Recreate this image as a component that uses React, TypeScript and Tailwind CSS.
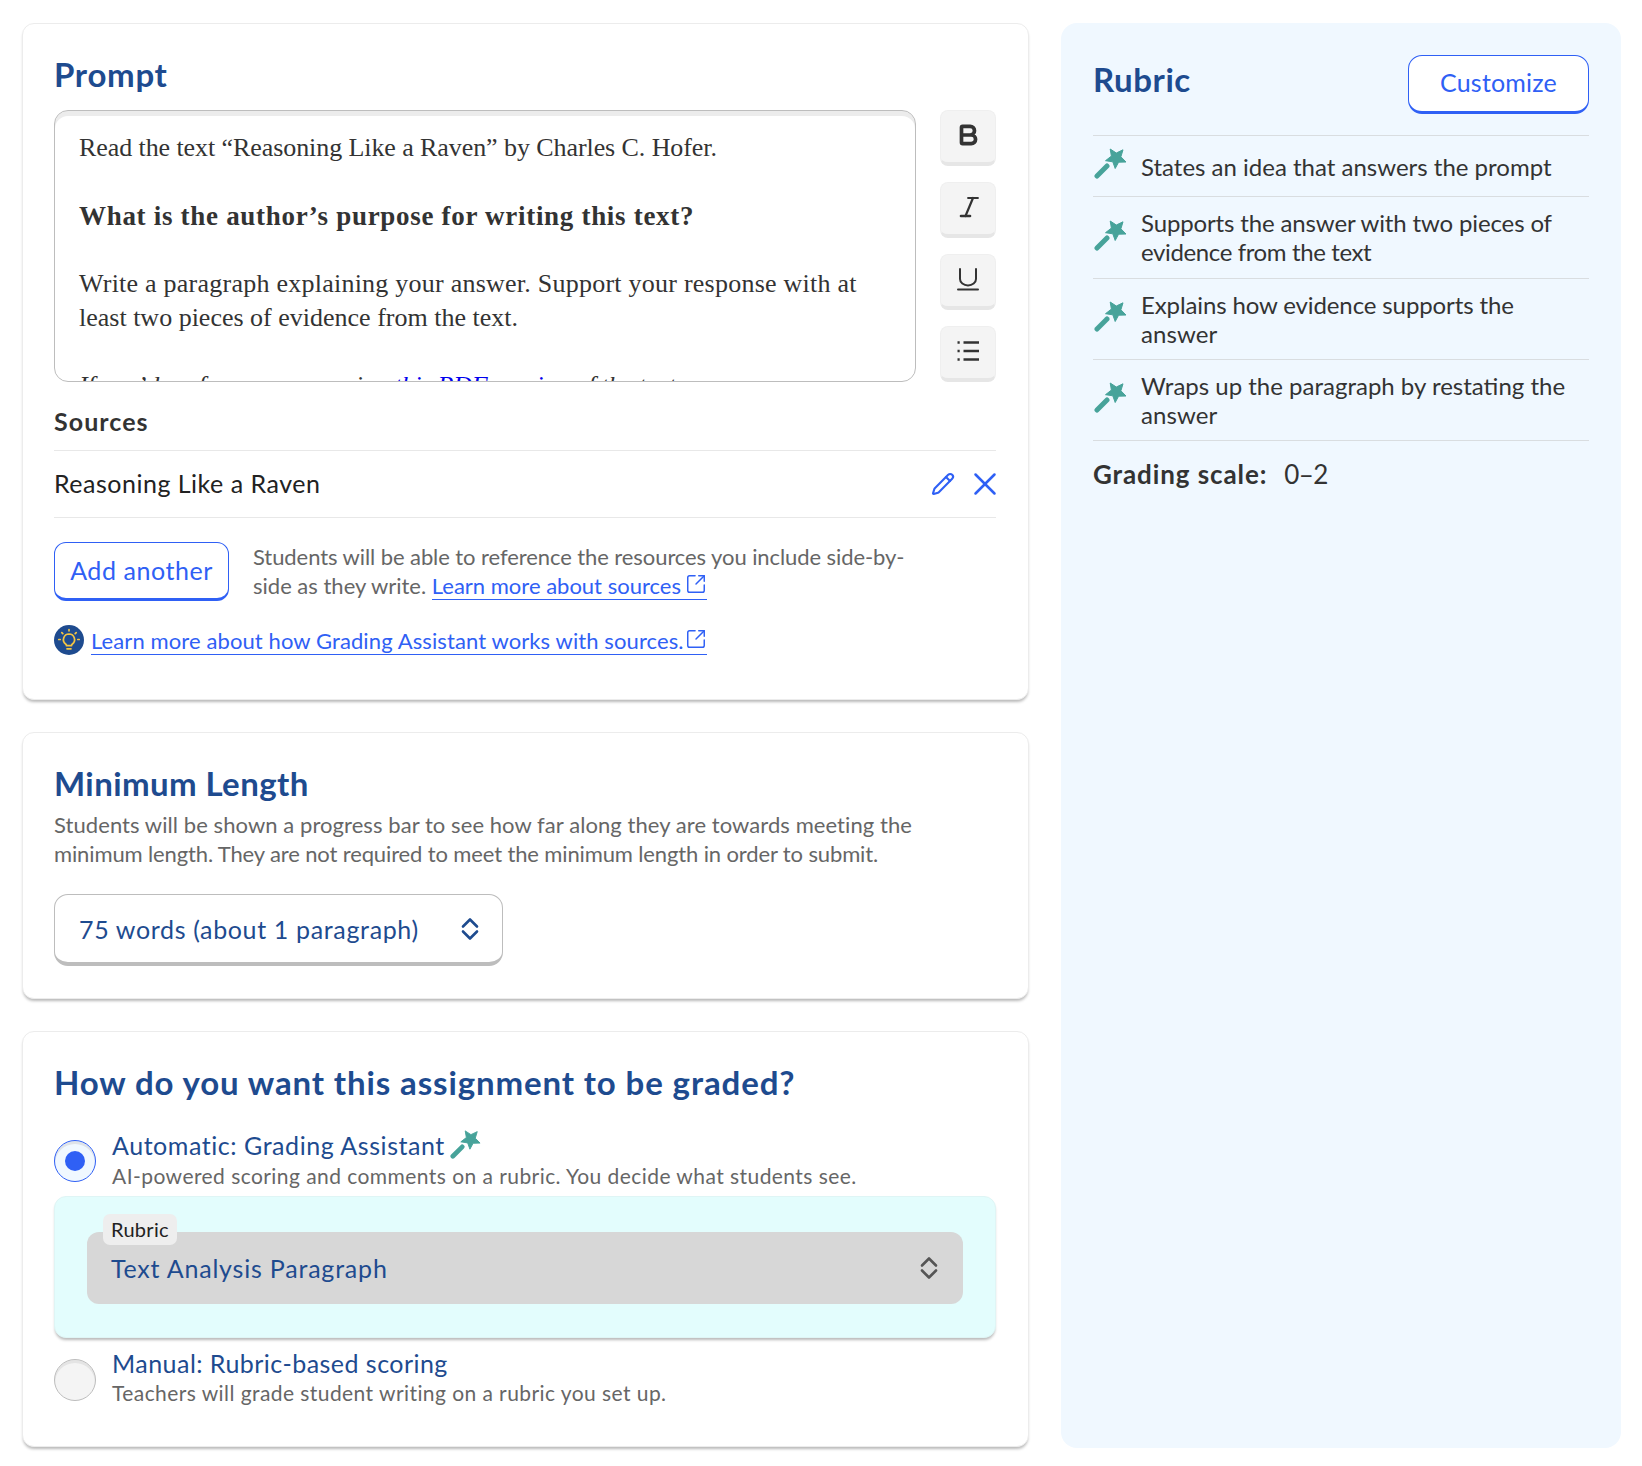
import React from "react";
import { Bold, Pencil, X, SquareArrowOutUpRight } from "lucide-react";

const sans = "font-['Lato','Noto_Sans',sans-serif]";

function Wand({ className = "" }: { className?: string }) {
  return (
    <svg viewBox="0 0 33 31" className={className} aria-hidden="true">
      <polygon
        points="16.2,1 22.3,5 29,1.8 26.9,8.8 32,14 24.6,14.2 21.2,20.5 18.8,13.8 11.5,12.7 17.4,8.1"
        fill="#47a39a"
        stroke="#47a39a"
        strokeWidth="1"
        strokeLinejoin="round"
      />
      <line x1="3" y1="28" x2="13" y2="18" stroke="#47a39a" strokeWidth="5" strokeLinecap="round" />
    </svg>
  );
}

function Updown({ color, className = "" }: { color: string; className?: string }) {
  return (
    <svg viewBox="0 0 20 24" className={className} fill="none" stroke={color} strokeWidth="2.6" strokeLinecap="round" strokeLinejoin="round" aria-hidden="true">
      <path d="M3 9.5 10 2.5l7 7" />
      <path d="M3 14.5l7 7 7-7" />
    </svg>
  );
}

function ItalicGlyph() {
  return (
    <svg viewBox="0 0 24 24" className="h-[24px] w-[24px]" fill="none" stroke="#333" strokeLinecap="round" aria-hidden="true">
      <path d="M12 3h10" strokeWidth="1.8" />
      <path d="M17 3 9.5 21" strokeWidth="2.2" />
      <path d="M5 21h9" strokeWidth="2.6" />
    </svg>
  );
}

function UnderlineGlyph() {
  return (
    <svg viewBox="0 0 24 24" className="h-[24px] w-[24px]" fill="none" stroke="#333" strokeWidth="2" strokeLinecap="round" aria-hidden="true">
      <path d="M4 2v10a8 6.5 0 0 0 16 0V2" />
      <path d="M2 22.5h20" />
    </svg>
  );
}

function ListGlyph() {
  return (
    <svg viewBox="0 0 24 24" className="h-[24px] w-[24px]" fill="none" stroke="#333" strokeWidth="2.3" aria-hidden="true">
      <path d="M7.5 3.5H23M7.5 12H23M7.5 20.5H23" />
      <path d="M1.5 3.5h2.2M1.5 12h2.2M1.5 20.5h2.2" />
    </svg>
  );
}

function BulbGlyph() {
  return (
    <svg viewBox="0 0 24 24" className="h-[24px] w-[24px]" fill="none" stroke="#f4c542" strokeWidth="1.7" strokeLinecap="round" strokeLinejoin="round" aria-hidden="true">
      <path d="M12 6a5.6 5.6 0 0 0-3.4 10c.6.5.9 1 .9 1.7h5c0-.7.3-1.2.9-1.7A5.6 5.6 0 0 0 12 6Z" />
      <path d="M10 20.8h4" />
      <path d="M12 1.5v1.3M4.8 4.6l1 1M19.2 4.6l-1 1M1.8 11.5h1.4M20.8 11.5h1.4" />
    </svg>
  );
}

function ToolButton({ children }: { children: React.ReactNode }) {
  return (
    <div className="flex h-[56px] w-[56px] items-center justify-center rounded-[8px] border border-[#efefef] border-b-[4px] border-b-[#e6e6e6] bg-[#f4f4f4] pb-[3px]">
      {children}
    </div>
  );
}

function Card({ className, children }: { className: string; children: React.ReactNode }) {
  return (
    <section className={`rounded-[12px] border border-[#ececec] bg-white pl-[31px] pr-[32px] pt-[30px] shadow-[0_3px_3px_-1px_rgba(0,0,0,0.28)] ${className}`}>
      {children}
    </section>
  );
}

function RubricRow({ children, h, wand }: { children: React.ReactNode; h: string; wand: string }) {
  return (
    <li className={`flex items-center gap-[15px] border-t border-[#d9dde0] ${h}`}>
      <Wand className={`h-[31px] w-[33px] shrink-0 translate-x-[1px] ${wand}`} />
      <span className="text-[24px] leading-[29px] text-[#333]">{children}</span>
    </li>
  );
}

function LinkIcon({ className }: { className: string }) {
  return <SquareArrowOutUpRight className={`inline-block h-[22px] w-[22px] align-[-1px] ${className}`} strokeWidth={1.6} />;
}

export default function App() {
  return (
    <div className={`flex min-h-[1466px] items-stretch gap-[32px] bg-white pb-[18px] pl-[22px] pr-[21px] pt-[23px] ${sans}`}>
      <main className="flex w-[1007px] shrink-0 flex-col gap-[32px]">
        <Card className="h-[677px]">
          <h2 className="mb-[16px] text-[33px] font-bold leading-[40px] tracking-[0.7px] text-[#1e4b8f]">Prompt</h2>
          <div className="flex items-start justify-between">
            <div className="h-[272px] w-[862px] overflow-hidden rounded-[14px] border border-[#bdbdbd] bg-white px-[24px] pt-[20px] font-['Liberation_Serif',serif] text-[26px] leading-[34px] text-[#333] shadow-[inset_0_5px_0_#ececec]">
              <p className="mb-[34px] tracking-[-0.08px]">Read the text “Reasoning Like a Raven” by Charles C. Hofer.</p>
              <p className="mb-[34px] text-[27px] font-bold tracking-[0.7px]">What is the author’s purpose for writing this text?</p>
              <p className="mb-[34px]">
                <span className="tracking-[0.24px]">Write a paragraph explaining your answer. Support your response with at</span>{" "}
                <span className="tracking-[0px]">least two pieces of evidence from the text.</span>
              </p>
              <p className="italic tracking-[-0.2px]">If you’d prefer, you can assign <a className="text-[#0000ee] underline">this PDF version</a> of the text.</p>
            </div>
            <div className="flex flex-col gap-[16px]">
              <ToolButton><Bold className="h-[26px] w-[26px] text-[#333]" strokeWidth={3.4} /></ToolButton>
              <ToolButton><ItalicGlyph /></ToolButton>
              <ToolButton><UnderlineGlyph /></ToolButton>
              <ToolButton><ListGlyph /></ToolButton>
            </div>
          </div>
          <h3 className="mt-[24px] h-[44px] text-[25px] font-bold leading-[30px] tracking-[1.05px] text-[#333]">Sources</h3>
          <div className="flex h-[68px] items-center justify-between border-y border-[#e8e8e8]">
            <span className="text-[25px] tracking-[0.5px] text-[#222]">Reasoning Like a Raven</span>
            <div className="-mr-[8px] flex items-center gap-[11px] text-[#2f60f5]">
              <Pencil className="h-[24px] w-[24px]" strokeWidth={2.1} />
              <X className="h-[38px] w-[38px]" strokeWidth={1.6} />
            </div>
          </div>
          <div className="mt-[24px] flex gap-[24px]">
            <button className="h-[59px] w-[175px] shrink-0 rounded-[12px] border border-[#2f60f5] border-b-[3px] bg-white text-[25px] tracking-[0.55px] text-[#2f60f5]">Add another</button>
            <p className="w-[665px] text-[22px] leading-[29px] text-[#666]">
              <span className="tracking-[-0.08px]">Students will be able to reference the resources you include side-by-</span>
              <span>side as they write.</span>{" "}
              <a className="border-b border-[#2f60f5] text-[#2f60f5]">Learn more about sources<LinkIcon className="ml-[4px]" /></a>
            </p>
          </div>
          <div className="mt-[24px] flex items-center gap-[7px]">
            <span className="flex h-[30px] w-[30px] items-center justify-center rounded-full bg-[#1e4b8f]">
              <BulbGlyph />
            </span>
            <a className="mt-[1px] border-b border-[#2f60f5] text-[22px] leading-[27px] tracking-[0.1px] text-[#2f60f5]">Learn more about how Grading Assistant works with sources.<LinkIcon className="ml-[1px]" /></a>
          </div>
        </Card>

        <Card className="h-[267px]">
          <h2 className="text-[33px] font-bold leading-[40px] tracking-[0.4px] text-[#1e4b8f]">Minimum Length</h2>
          <p className="mt-[7px] flex flex-col text-[22px] leading-[29px] text-[#666]">
            <span className="tracking-[0.07px]">Students will be shown a progress bar to see how far along they are towards meeting the</span>
            <span className="tracking-[-0.13px]">minimum length. They are not required to meet the minimum length in order to submit.</span>
          </p>
          <div className="mt-[26px] flex h-[72px] w-[449px] items-center justify-between rounded-[14px] border border-[#bdbdbd] border-b-[4px] bg-white pl-[24px] pr-[22px]">
            <span className="translate-y-[1px] text-[25px] tracking-[0.65px] text-[#1e4b8f]">75 words (about 1 paragraph)</span>
            <Updown color="#1e4b8f" className="h-[24px] w-[20px]" />
          </div>
        </Card>

        <Card className="h-[416px]">
          <h2 className="text-[33px] font-bold leading-[40px] tracking-[0.88px] text-[#1e4b8f]">How do you want this assignment to be graded?</h2>
          <div className="mt-[29px] flex items-center gap-[16px]">
            <span className="flex h-[42px] w-[42px] items-center justify-center rounded-full border border-[#2f60f5] bg-[#f0f8ff] shadow-[inset_0_3px_0_#dfe3e8]">
              <span className="h-[20px] w-[20px] rounded-full bg-[#2f60f5]" />
            </span>
            <div>
              <div className="flex h-[30px] items-center gap-[5px] text-[25px] tracking-[0.55px] text-[#1e4b8f]">
                Automatic: Grading Assistant
                <Wand className="-mt-[4px] h-[31px] w-[31px]" />
              </div>
              <p className="text-[21px] leading-[30px] tracking-[0.44px] text-[#666]">AI-powered scoring and comments on a rubric. You decide what students see.</p>
            </div>
          </div>
          <div className="relative mt-[5px] h-[142px] rounded-[12px] border border-[#dff5f5] bg-[#e3fdfd] px-[32px] pt-[35px] shadow-[0_3px_3px_-1px_rgba(0,0,0,0.28)]">
            <span className="absolute left-[48px] top-[17px] z-10 rounded-[7px] bg-[#eeeeee] px-[8px] text-[20px] leading-[31px] tracking-[0.3px] text-[#222]">Rubric</span>
            <div className="flex h-[72px] items-center justify-between rounded-[12px] bg-[#d7d7d7] pl-[24px] pr-[24px]">
              <span className="translate-y-[1px] text-[25px] tracking-[0.8px] text-[#1e4b8f]">Text Analysis Paragraph</span>
              <Updown color="#555" className="h-[24px] w-[20px]" />
            </div>
          </div>
          <div className="mt-[11px] flex items-center gap-[16px]">
            <span className="mt-[2px] h-[42px] w-[42px] rounded-full border border-[#bdbdbd] bg-[#f4f4f4] shadow-[inset_0_3px_0_#e4e4e4]" />
            <div className="-translate-y-[1px]">
              <div className="text-[25px] leading-[30px] tracking-[0.46px] text-[#1e4b8f]">Manual: Rubric-based scoring</div>
              <p className="text-[21px] leading-[30px] tracking-[0.43px] text-[#666]">Teachers will grade student writing on a rubric you set up.</p>
            </div>
          </div>
        </Card>
      </main>

      <aside className="flex-1 rounded-[16px] bg-[#f0f8ff] px-[32px] pt-[31px]">
        <div className="flex h-[81px] items-start justify-between">
          <h2 className="mt-[5px] text-[33px] font-bold leading-[40px] tracking-[0.55px] text-[#1e4b8f]">Rubric</h2>
          <button className="mt-[1px] h-[59px] w-[181px] rounded-[14px] border border-[#2f60f5] border-b-[3px] bg-white pb-[2px] text-[25px] tracking-[0.2px] text-[#2f60f5]">Customize</button>
        </div>
        <ul className="border-b border-[#d9dde0]">
          <RubricRow h="h-[61px]" wand="-translate-y-[3px]">States an idea that answers the prompt</RubricRow>
          <RubricRow h="h-[82px]" wand="-translate-y-[2px]">
            <span className="-mt-[1px] flex flex-col">
              <span className="tracking-[-0.14px]">Supports the answer with two pieces of</span>
              <span className="tracking-[-0.38px]">evidence from the text</span>
            </span>
          </RubricRow>
          <RubricRow h="h-[81px]" wand="-translate-y-[3px]">
            <span className="flex flex-col">
              <span className="tracking-[-0.12px]">Explains how evidence supports the</span>
              <span className="tracking-[0.1px]">answer</span>
            </span>
          </RubricRow>
          <RubricRow h="h-[81px]" wand="-translate-y-[3px]">
            <span className="flex flex-col">
              <span>Wraps up the paragraph by restating the</span>
              <span className="tracking-[0.1px]">answer</span>
            </span>
          </RubricRow>
        </ul>
        <p className="mt-[18px] flex gap-[17px] text-[26px] leading-[30px] text-[#333]">
          <b className="font-bold tracking-[0.9px]">Grading scale:</b>
          <span className="tracking-[-0.6px]">0–2</span>
        </p>
      </aside>
    </div>
  );
}
